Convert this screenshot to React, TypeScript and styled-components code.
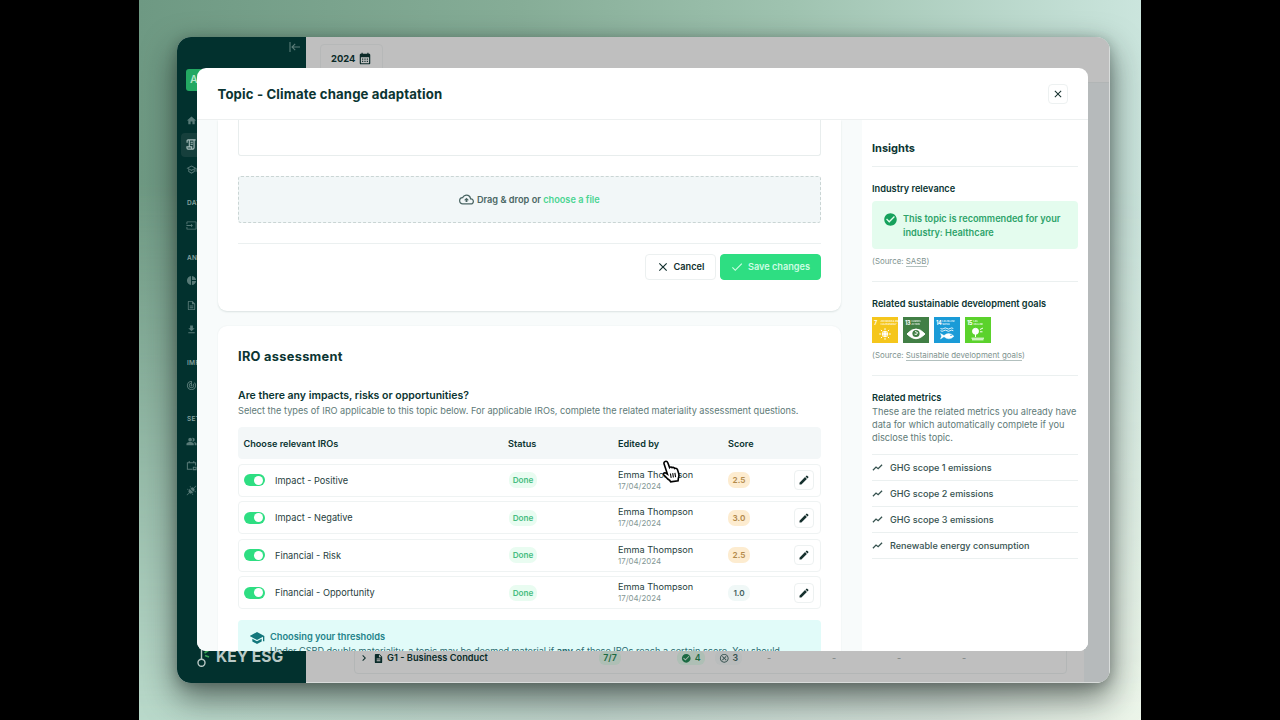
import React from "react";
import styled, { createGlobalStyle } from "styled-components";
import {
  MdHome, MdSchool, MdOutlineSchool, MdPieChart, MdDescription, MdOutlineDescription, MdFileDownload, MdTrackChanges,
  MdPeopleAlt, MdEdit, MdCheckCircle, MdClose, MdCheck, MdOutlineCloudUpload,
  MdChevronRight, MdCalendarMonth, MdOutlineCancel, MdInput,
} from "react-icons/md";
import { PiPlugsConnectedFill } from "react-icons/pi";

const Global = createGlobalStyle`
  * { box-sizing: border-box; }
  body { margin: 0; background: #000; font-family: Inter, "Liberation Sans", sans-serif; overflow: hidden; }
`;

const ink = "#0b3532";
const muted = "#607a77";
const line = "#ebf0f0";
const green = "#2ede82";

const Screen = styled.div`
  width: 1280px; height: 720px; background: #000; display: flex; justify-content: center;
`;
const Backdrop = styled.div`
  position: relative; width: 1002px; height: 720px; padding: 37px 31px 0 38px; overflow: hidden; isolation: isolate;
  background: linear-gradient(90deg, #6e9983 0%, #86ad97 38%, #9fc3b0 65%, #cbe5dd 100%);
  &::before {
    content: ""; position: absolute; inset: 0; z-index: -1;
    background: linear-gradient(90deg, #b9d9ca 0%, #bfd3cb 45%, #d3e0d8 80%, #edf6ea 100%);
    mask-image: linear-gradient(to bottom, transparent 25%, #000 100%);
  }
`;
const Window = styled.div`
  position: relative; width: 933px; height: 646px; border-radius: 14px; display: flex;
  box-shadow: 0 14px 32px 2px rgba(20, 28, 26, 0.55), 0 2px 12px rgba(20, 30, 26, 0.25);
`;
const AppFrame = styled.div`
  display: flex; flex: 1; border-radius: 14px; overflow: hidden; background: #d9dcdb;
`;
const Sidebar = styled.nav`
  width: 129px; background: #02312e; display: flex; flex-direction: column; color: #5b7d79;
`;
const SideTop = styled.div`
  height: 30px; display: flex; justify-content: flex-end; padding: 4px 5px 0 0;
`;
const Org = styled.div`
  margin: 2px 0 0 9px; width: 22px; height: 22px; border-radius: 3px; background: #23a862; color: #b3e6c9;
  font-size: 10.5px; font-weight: 600; line-height: 22px; padding-left: 4px;
`;
const Nav = styled.div`padding: 17px 4px 0; display: flex; flex-direction: column;`;
const NavItem = styled.div<{ $active?: boolean }>`
  height: 24.6px; padding-left: 5px; display: flex; align-items: center; border-radius: 4px;
  color: ${p => (p.$active ? "#a9bfbc" : "#587a77")};
  background: ${p => (p.$active ? "#163f3c" : "transparent")};
  svg { width: 11px; height: 11px; }
`;
const NavLabel = styled.div`
  height: 31px; padding: 16px 0 0 6px; font-size: 6.5px; line-height: 10px; font-weight: 600; letter-spacing: 0.3px; color: #85a19e;
`;
const Brand = styled.div`
  margin-top: auto; height: 39px; display: flex; align-items: flex-start; padding-left: 19px; color: #bac9c6;
  svg { flex: none; }
`;
const BrandText = styled.span`
  font-size: 15.6px; font-weight: 700; line-height: 26px; margin-left: 2px;
`;
const Page = styled.div`flex: 1; display: flex; flex-direction: column; margin: 0 1px 1px 0;`;
const TopBar = styled.div`height: 46px; padding: 7px 14px 0; border-bottom: 1px solid #b1b5b5; background: #bfbfbf;`;
const YearButton = styled.div`
  width: 63px; height: 28px; border: 1px solid #b6b8b8; border-radius: 4px; display: flex; align-items: center; gap: 3px;
  padding-left: 10px; color: #0b2a28; font-size: 9.4px; font-weight: 700;
  svg { width: 14px; height: 15px; }
`;
const PageBody = styled.div`
  flex: 1; background: #b6babb; display: flex; padding: 0 25px 0 0;
`;
const PageInner = styled.div`
  flex: 1; display: flex; flex-direction: column; justify-content: flex-end; background: #bfbfbf; padding: 0 17px 8px 48px;
`;
const StandardRow = styled.div`
  height: 46px; border: 1px solid #b3b6b6; border-radius: 4px; padding-top: 13px;
  display: grid; grid-template-columns: 200px 110px 52px 23px 58px 72px 58px 72px; align-items: start;
  font-size: 8.8px; line-height: 32px; font-weight: 600; color: #0a2b29;
`;
const StandardName = styled.div`
  display: flex; align-items: center; font-size: 9.25px; height: 32px; padding-left: 3px; white-space: nowrap;
  svg:nth-child(1) { width: 12px; height: 12px; }
  svg:nth-child(2) { width: 11px; height: 11px; margin: 0 3px 0 3px; }
`;
const Tally = styled.div<{ $tone: "green" | "grey" | "none" }>`
  display: flex; align-items: center; justify-self: center; gap: 3px; height: 14px; margin-top: 9px; padding: 0 4px; border-radius: 6px;
  color: ${p => (p.$tone === "green" ? "#1b6a42" : p.$tone === "grey" ? "#34504e" : "#858b8b")};
  background: ${p => (p.$tone === "green" ? "#aebfb5" : p.$tone === "grey" ? "#b9bcbc" : "transparent")};
  svg { width: 10.5px; height: 10.5px; }
`;

const Modal = styled.section`
  position: absolute; left: 20px; top: 31px; width: 891px; height: 582.5px; border-radius: 9px; background: #fff;
  overflow: hidden; display: flex; flex-direction: column; color: ${ink};
`;
const ModalHead = styled.header`
  height: 52px; flex: none; display: flex; align-items: center; justify-content: space-between; padding: 0 20px 0 20.5px;
  border-bottom: 1px solid #edf0f0;
`;
const Title = styled.h1`margin: 0; font-size: 13.2px; line-height: 18px; font-weight: 700; letter-spacing: 0.13px; white-space: nowrap;`;
const SquareButton = styled.button`
  width: 20px; height: 20px; border: 1px solid #edf1f1; border-radius: 4px; background: #fff; padding: 0; color: #16302e;
  display: flex; align-items: center; justify-content: center;
  svg { width: 12px; height: 12px; }
`;
const ModalBody = styled.div`flex: 1; min-height: 0; display: flex; background: #f8fbfb;`;
const Main = styled.main`
  width: 665px; padding: 0 21px; display: flex; flex-direction: column; gap: 15px; overflow: hidden;
`;
const NotesCard = styled.div`
  flex: none; height: 191px; background: #fff; border-radius: 0 0 9px 9px; padding: 0 20.5px 0 20px; box-shadow: 0 1px 2px rgba(20, 60, 55, 0.13);
`;
const NotesField = styled.div`height: 36px; border: 1px solid #e8eded; border-top: 0; border-radius: 0 0 3px 3px;`;
const DropZone = styled.div`
  margin-top: 20px; height: 47px; background: #f2f7f8; display: flex; align-items: center; justify-content: center; gap: 3px;
  border: 1px dashed #cad5d4; border-radius: 3px; font-size: 9.2px; font-weight: 600; color: #4b6664; white-space: pre;
  svg { width: 15px; height: 15px; }
`;
const Choose = styled.span`color: #4bd592;`;
const Actions = styled.div`
  margin-top: 20px; border-top: 1px solid ${line}; padding-top: 9.5px; display: flex; justify-content: flex-end; gap: 4px;
`;
const Button = styled.button<{ $primary?: boolean }>`
  height: 26px; width: ${p => (p.$primary ? "101px" : "71px")}; padding: 0; border-radius: 4px;
  border: 1px solid ${p => (p.$primary ? green : "#ecf0f0")};
  background: ${p => (p.$primary ? green : "#fff")}; color: ${p => (p.$primary ? "#cdfde2" : "#12302e")};
  font-family: inherit; font-size: 9.2px; font-weight: 600; display: flex; align-items: center; justify-content: center; gap: 4px; white-space: nowrap;
  svg { width: 14px; height: 14px; }
`;
const IroCard = styled.div`
  flex: none; height: 400px; background: #fff; border-radius: 9px 9px 0 0; padding: 21px 20.5px 0 20px; box-shadow: 0 0 2px rgba(20, 60, 55, 0.07);
`;
const SectionTitle = styled.h2`margin: 0 0 21px; font-size: 12.8px; line-height: 20px; font-weight: 700; letter-spacing: 0.3px;`;
const Question = styled.h3`margin: 0; font-size: 10.5px; line-height: 15px; font-weight: 600;`;
const Hint = styled.p`margin: 0; font-size: 9.18px; line-height: 15px; color: ${muted}; white-space: nowrap;`;
const TableRow = styled.div`
  display: grid; grid-template-columns: 264.5px 110px 110px 66px 1fr; align-items: center; height: 33px;
  padding: 0 0 0 4.5px; margin-top: 4.5px; border: 1px solid #eff3f3; border-radius: 4px; font-size: 9.2px; color: #1f403d;
`;
const TableHead = styled(TableRow)`
  height: 32px; margin-top: 9px; background: #f3f7f8; border-color: #f3f7f8; font-weight: 600; color: ${ink}; font-size: 9.15px;
`;
const Kind = styled.div`display: flex; align-items: center; gap: 10.5px;`;
const Toggle = styled.span`
  width: 21px; height: 12px; border-radius: 6px; background: ${green}; display: flex; justify-content: flex-end; align-items: center; padding-right: 1.5px;
  &::after { content: ""; width: 9px; height: 9px; border-radius: 50%; background: #fff; }
`;
const Pill = styled.span<{ $tone: "done" | "amber" | "mint" }>`
  display: inline-block; height: 16px; line-height: 16px; border-radius: 7px; font-weight: 600; text-align: center;
  font-size: ${p => (p.$tone === "done" ? "8.2px" : "8.2px")};
  width: ${p => (p.$tone === "done" ? "28px" : "22px")};
  margin-left: ${p => (p.$tone === "done" ? "1px" : "0")};
  color: ${p => ({ done: "#46bd81", amber: "#b38a4c", mint: "#46635f" })[p.$tone]};
  background: ${p => ({ done: "#e9fcf1", amber: "#fdecd0", mint: "#f0f8f7" })[p.$tone]};
`;
const Editor = styled.div`line-height: 12px; font-size: 9.15px;`;
const EditDate = styled.div`font-size: 7.9px; line-height: 11px; color: #849795;`;
const Callout = styled.div`
  margin-top: 11px; height: 60px; background: #e1fbf9; border-radius: 4px; padding: 10px 11px; display: flex; gap: 5px;
  svg { width: 16px; height: 16px; color: #13777c; flex: none; }
`;
const CalloutTitle = styled.div`font-size: 9.25px; font-weight: 600; line-height: 14px; color: #23838a;`;
const CalloutText = styled.div`font-size: 9.12px; line-height: 13px; color: #2b6c70; white-space: nowrap;`;

const Aside = styled.aside`
  flex: 1; background: #fff; padding: 20px 10px 0; display: flex; flex-direction: column; min-width: 0;
`;
const AsideTitle = styled.h2`margin: 0; height: 27px; font-size: 11px; line-height: 16px; font-weight: 700; border-bottom: 1px solid ${line};`;
const Block = styled.div<{ $h: number; $top: number }>`
  height: ${p => p.$h}px; padding-top: ${p => p.$top}px; border-bottom: 1px solid ${line};
`;
const BlockTitle = styled.h3`margin: 0; font-size: 9.22px; line-height: 14px; font-weight: 600; white-space: nowrap;`;
const Recommendation = styled.div`
  margin-top: 5px; height: 48px; background: #e4fcee; border-radius: 4px; display: flex; gap: 6px; padding: 11px;
  font-size: 9.2px; line-height: 13.5px; font-weight: 600; color: #2ea36a; white-space: nowrap;
  svg { width: 15px; height: 15px; margin-left: -0.5px; margin-right: -0.5px; color: #16a15c; flex: none; }
`;
const Source = styled.div`font-size: 7.9px; line-height: 12px; margin-top: 6px; color: #80938f; white-space: nowrap;`;
const SourceLink = styled.span`border-bottom: 1px solid #b2c0be; display: inline-block; line-height: 10px;`;
const Goals = styled.div`display: flex; gap: 5.1px; margin-top: 6px;`;
const Goal = styled.div<{ $color: string }>`
  width: 26px; height: 26px; background: ${p => p.$color};
  svg { display: block; }
`;
const Description = styled.p`margin: 0; font-size: 9.22px; line-height: 13px; color: ${muted}; white-space: nowrap;`;
const Metric = styled.div`
  height: 26px; border-bottom: 1px solid ${line}; display: flex; align-items: center; gap: 7px; font-size: 9.1px; font-weight: 500; color: #36524f;
  svg { width: 11px; height: 11px; }
`;
const Cursor = styled.svg`position: absolute; left: 484px; top: 423px;`;

const rows = [
  { kind: "Impact - Positive", score: "2.5", tone: "amber" as const },
  { kind: "Impact - Negative", score: "3.0", tone: "amber" as const },
  { kind: "Financial - Risk", score: "2.5", tone: "amber" as const },
  { kind: "Financial - Opportunity", score: "1.0", tone: "mint" as const },
];

const goals = [
  { color: "#f5c61c", n: "7", label: ["AFFORDABLE AND", "CLEAN ENERGY"], art: <><circle cx="13" cy="17" r="2.7" /><circle cx="13" cy="17" r="1.4" fill="#fff" /><path d="M13 11.2v2M13 20.8v2M7.2 17h2M16.8 17h2M8.9 12.9l1.4 1.4M15.7 19.7l1.4 1.4M17.1 12.9l-1.4 1.4M10.3 19.7l-1.4 1.4" /></> },
  { color: "#417f45", n: "13", label: ["CLIMATE", "ACTION"], art: <><path fill="#fff" d="M4 17q9-10 18 0q-9 9.5-18 0z" /><circle cx="13" cy="16.5" r="3.6" fill="#417f45" stroke="none" /><path d="M12 14.5l2.500 1-1 2-2-.4" strokeWidth="1" /></> },
  { color: "#1a9bd7", n: "14", label: ["LIFE BELOW", "WATER"], art: <><path d="M6.500 11.500q1.600 1.200 3.200 0t3.200 0t3.200 0t3.200 0M6.500 13.700q1.600 1.200 3.200 0t3.200 0t3.200 0t3.200 0" strokeWidth=".9" /><path fill="#fff" strokeWidth=".4" d="M6.500 16.500l3.500 2q5-4.500 10 .7q-5 5-10 .5l-3.500 2.300 1-2.700z" /><circle cx="17" cy="18.400" r=".7" fill="#1a9bd7" stroke="none" /></> },
  { color: "#5bd22c", n: "15", label: ["LIFE", "ON LAND"], art: <><circle cx="10.500" cy="14.300" r="3" fill="#fff" /><path d="M10.500 17v3M6.500 21.200h12.500M7 22.800h11.500M15 12.500l3-1.500M15 14.800h2.500" /></> },
];

const Trend = () => (
  <svg viewBox="0 0 12 12" fill="none" stroke="currentColor" strokeWidth="1.35"><path d="M1 9L4.400 5.600L6.700 7.400L11 3" /></svg>
);

export default function App() {
  return (
    <>
      <Global />
      <Screen>
        <Backdrop>
          <Window>
            <AppFrame>
              <Sidebar>
                <SideTop>
                  <svg width="12" height="12" viewBox="0 0 12 12" fill="none" stroke="currentColor" strokeWidth="1.1"><path d="M1 1v10M11 6H3M6.200 2.800L3 6l3.200 3.200" /></svg>
                </SideTop>
                <Org>A</Org>
                <Nav>
                  <NavItem><MdHome /></NavItem>
                  <NavItem $active>
                    <svg viewBox="0 0 12 12" fill="none" stroke="currentColor" strokeWidth="1.2"><path d="M1.200 4V2q0-1 1-1h8.300M3.600 1.500V8M8.800 1.500V9.500q0 1.500-1.400 1.500H2.200Q1 11 1 9.500V8.600H6.200V10q0 1 1.200 1M5 3.500h2.400M5 5.800h2.400" /></svg>
                  </NavItem>
                  <NavItem><MdOutlineSchool /></NavItem>
                  <NavLabel>DATA</NavLabel>
                  <NavItem><MdInput /></NavItem>
                  <NavLabel>ANALYSE</NavLabel>
                  <NavItem><MdPieChart /></NavItem>
                  <NavItem><MdOutlineDescription /></NavItem>
                  <NavItem><MdFileDownload /></NavItem>
                  <NavLabel>IMPROVE</NavLabel>
                  <NavItem><MdTrackChanges /></NavItem>
                  <NavLabel>SETTINGS</NavLabel>
                  <NavItem><MdPeopleAlt /></NavItem>
                  <NavItem><svg viewBox="0 0 12 12" fill="none" stroke="currentColor" strokeWidth="1.1"><path d="M7 10H1.500V3H10.500V6M3.500 1.200V3M8.500 1.200V3M8 8h3v2.500H8z" /></svg></NavItem>
                  <NavItem><PiPlugsConnectedFill /></NavItem>
                </Nav>
                <Brand>
                  <svg width="18" height="26" viewBox="0 0 18 26" fill="none" stroke="currentColor" strokeWidth="1.4"><circle cx="5.500" cy="18.800" r="3.500" /><path d="M5.500 15.300V3" /><path d="M8.500 9l4.500-3M9 11.500l4 1.500" stroke="#3aa457" strokeWidth="1.800" /></svg>
                  <BrandText>KEY ESG</BrandText>
                </Brand>
              </Sidebar>
              <Page>
                <TopBar><YearButton>2024 <MdCalendarMonth /></YearButton></TopBar>
                <PageBody>
                  <PageInner>
                    <StandardRow>
                      <StandardName><MdChevronRight /><MdDescription />G1 - Business Conduct</StandardName>
                      <Tally $tone="green">7/7</Tally>
                      <Tally $tone="green"><MdCheckCircle />4</Tally>
                      <Tally $tone="grey"><MdOutlineCancel />3</Tally>
                      <Tally $tone="none">-</Tally>
                      <Tally $tone="none">-</Tally>
                      <Tally $tone="none">-</Tally>
                      <Tally $tone="none">-</Tally>
                    </StandardRow>
                  </PageInner>
                </PageBody>
              </Page>
            </AppFrame>
            <Modal>
              <ModalHead>
                <Title>Topic - Climate change adaptation</Title>
                <SquareButton aria-label="Close"><MdClose /></SquareButton>
              </ModalHead>
              <ModalBody>
                <Main>
                  <NotesCard>
                    <NotesField />
                    <DropZone><MdOutlineCloudUpload /><span>Drag & drop or <Choose>choose a file</Choose></span></DropZone>
                    <Actions>
                      <Button><MdClose />Cancel</Button>
                      <Button $primary><MdCheck />Save changes</Button>
                    </Actions>
                  </NotesCard>
                  <IroCard>
                    <SectionTitle>IRO assessment</SectionTitle>
                    <Question>Are there any impacts, risks or opportunities?</Question>
                    <Hint>Select the types of IRO applicable to this topic below. For applicable IROs, complete the related materiality assessment questions.</Hint>
                    <TableHead><span>Choose relevant IROs</span><span>Status</span><span>Edited by</span><span>Score</span></TableHead>
                    {rows.map(r => (
                      <TableRow key={r.kind}>
                        <Kind><Toggle />{r.kind}</Kind>
                        <div><Pill $tone="done">Done</Pill></div>
                        <Editor>Emma Thompson<EditDate>17/04/2024</EditDate></Editor>
                        <div><Pill $tone={r.tone}>{r.score}</Pill></div>
                        <SquareButton aria-label="Edit"><MdEdit /></SquareButton>
                      </TableRow>
                    ))}
                    <Callout>
                      <MdSchool />
                      <div>
                        <CalloutTitle>Choosing your thresholds</CalloutTitle>
                        <CalloutText>Under CSRD double materiality, a topic may be deemed material if <b>any</b> of these IROs reach a certain score. You should</CalloutText>
                      </div>
                    </Callout>
                  </IroCard>
                </Main>
                <Aside>
                  <AsideTitle>Insights</AsideTitle>
                  <Block $h={115} $top={15}>
                    <BlockTitle>Industry relevance</BlockTitle>
                    <Recommendation><MdCheckCircle /><span>This topic is recommended for your<br />industry: Healthcare</span></Recommendation>
                    <Source>(Source: <SourceLink>SASB</SourceLink>)</Source>
                  </Block>
                  <Block $h={94} $top={15}>
                    <BlockTitle>Related sustainable development goals</BlockTitle>
                    <Goals>
                      {goals.map(g => (
                        <Goal key={g.n} $color={g.color}>
                          <svg width="26" height="26" viewBox="0 0 26 26" fill="none" stroke="#fff" strokeWidth="1">
                            <text x="2" y="7.500" fontSize="5.500" fontWeight="700" fill="#fff" stroke="none" letterSpacing="-.4">{g.n}</text>
                            <text x="8.500" y="4.600" fontSize="2.100" fontWeight="700" fill="#fff" stroke="none" opacity=".85">{g.label[0]}</text>
                            <text x="8.500" y="7.500" fontSize="2.100" fontWeight="700" fill="#fff" stroke="none" opacity=".85">{g.label[1]}</text>
                            {g.art}
                          </svg>
                        </Goal>
                      ))}
                    </Goals>
                    <Source>(Source: <SourceLink>Sustainable development goals</SourceLink>)</Source>
                  </Block>
                  <Block $h={79} $top={15}>
                    <BlockTitle>Related metrics</BlockTitle>
                    <Description>These are the related metrics you already have<br />data for which automatically complete if you<br />disclose this topic.</Description>
                  </Block>
                  {["GHG scope 1 emissions", "GHG scope 2 emissions", "GHG scope 3 emissions", "Renewable energy consumption"].map(m => (
                    <Metric key={m}><Trend />{m}</Metric>
                  ))}
                </Aside>
              </ModalBody>
            </Modal>
            <Cursor width="20" height="24" viewBox="0 0 20 24">
              <path d="M4.200 1.400c1.300-.4 2.200.3 2.600 1.300l1.800 4.900c.7-.9 2-.8 2.500.1 1-.7 2.100-.3 2.500.7 1.300-.4 2.500.2 3 1.500l1.100 3.500c.6 2 .2 3.400-.4 5.200l-.2 2.200-7.400 1.100-1.100-1.700c-1.600-.7-2.800-2-4-3.500-.9-1-2-1.500-2.200-2.500-.2-1.200 1.200-1.700 2.500-1.100l1.500 1L3.100 3.900c-.4-1.100 0-2.100 1.100-2.500z" fill="#fff" stroke="#000" strokeWidth="1.600" />
              <path d="M9.400 13.500l.8 4.400M11.700 13.200l.7 4.300M13.900 12.800l.7 4.300" stroke="#000" strokeWidth="1.100" />
            </Cursor>
          </Window>
        </Backdrop>
      </Screen>
    </>
  );
}
